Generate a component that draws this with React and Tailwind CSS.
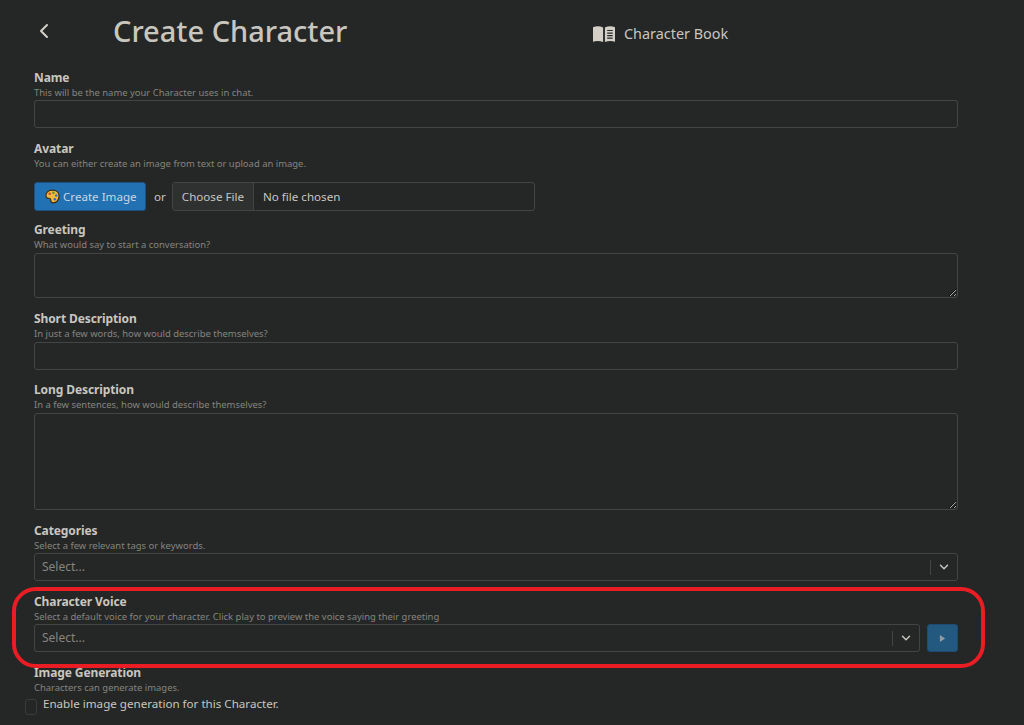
import { ChevronLeft, ChevronDown } from "lucide-react";

const inputCls = "block w-full rounded-[3px] border border-[#434545] bg-transparent";

function Label({ title, hint, gap = "mb-px" }) {
  return (
    <div className={gap}>
      <div className="h-[16px] text-[12px] leading-[16px] font-bold tracking-[-0.1px] text-[#c9c6bf]">{title}</div>
      <div className="h-[14px] text-[9.45px] leading-[14px] text-[#86847e]">{hint}</div>
    </div>
  );
}

function SelectBox({ className }) {
  return (
    <div className={`flex h-[28px] items-center rounded-[3px] border border-[#434545] ${className}`}>
      <span className="flex-1 pl-[7px] text-[12px] text-[#86847e]">Select...</span>
      <span className="h-[15px] w-px bg-[#434545]" />
      <ChevronDown className="mx-[6px] h-[14px] w-[14px] text-[#c9c6bf]" strokeWidth={2.5} />
    </div>
  );
}

function PaletteIcon() {
  return (
    <svg viewBox="0 0 16 16" className="h-[15px] w-[15px] shrink-0">
      <path d="M8 1.2C3.8 1.2 1 3.6 1 6.8c0 2.4 1.6 3.2 3 3.1 1.4-.1 2 .5 2 1.6 0 1.6 1 3.3 2.8 3.3 3.6 0 6.2-3.3 6.2-7.3C15 3.6 12 1.2 8 1.2z" fill="#f5b83d" stroke="#3a2a10" strokeWidth="1.2" />
      <circle cx="5" cy="5" r="1.3" fill="#d9412f" />
      <circle cx="9" cy="4" r="1.3" fill="#4a9a3c" />
      <circle cx="12" cy="7" r="1.3" fill="#2f6fc4" />
      <circle cx="10.5" cy="11" r="1.3" fill="#2f6fc4" />
    </svg>
  );
}

function BookIcon() {
  return (
    <svg viewBox="0 0 24 20" className="h-[18px] w-[22px]" preserveAspectRatio="none" fill="#d3cfc7">
      <path d="M0 2.5C3.5 1 7.5 1 11 2.8V19c-3.5-1.6-7.5-1.6-11-.4z" />
      <path d="M13 2.8C16.5 1 20.5 1 24 2.5v16.1c-3.5-1.2-7.5-1.2-11 .4z" />
      <path d="M15.5 6.2h6M15.5 9h6M15.5 11.8h6M15.5 14.6h6" stroke="#262828" strokeWidth="1.2" />
    </svg>
  );
}

export default function App() {
  return (
    <div className="relative h-[725px] w-[1024px] overflow-hidden bg-[#252727] font-['Noto_Sans',sans-serif]">
      {/* Шапка */}
      <header className="flex h-[70px] items-start">
        <ChevronLeft className="ml-[32px] mt-[19px] h-[24px] w-[24px] text-[#d3cfc7]" strokeWidth={2} />
        <h1 className="ml-[57px] mt-[11px] w-[400px] text-[29px] leading-[40px] font-medium text-[#c9c6bf]">Create Character</h1>
        <div className="ml-[80px] mt-[24px] flex items-center gap-[9px]">
          <BookIcon />
          <span className="text-[14.4px] leading-[20px] text-[#c9c6bf]">Character Book</span>
        </div>
      </header>

      <main className="ml-[34px] flex w-[924px] flex-col">
        <Label title="Name" hint="This will be the name your Character uses in chat." gap="mb-0" />
        <div className={`${inputCls} h-[28px]`} />

        <div className="mt-[13px]">
          <Label title="Avatar" hint="You can either create an image from text or upload an image." />
        </div>
        <div className="mt-[10px] flex h-[29px] items-center">
          <button type="button" className="flex h-full w-[112px] items-center gap-[3px] rounded-[3px] border border-[#1c4f82] bg-[#2271b3] pl-[10px] text-[11.6px] text-[#c9d6e2]">
            <PaletteIcon />
            Create Image
          </button>
          <span className="ml-[8px] mr-[6px] text-[11.6px] text-[#c9c6bf]">or</span>
          <div className="flex h-full w-[363px] items-center rounded-[3px] border border-[#434545] text-[11.6px] text-[#c9c6bf]">
            <span className="flex h-full items-center border-r border-[#434545] bg-[#2f3131] px-[9px]">Choose File</span>
            <span className="pl-[9px]">No file chosen</span>
          </div>
        </div>

        <div className="mt-[11px]">
          <Label title="Greeting" hint="What would say to start a conversation?" />
        </div>
        <textarea className={`${inputCls} h-[45px]`} />

        <div className="mt-[13px]">
          <Label title="Short Description" hint="In just a few words, how would describe themselves?" />
        </div>
        <div className={`${inputCls} h-[28px]`} />

        <div className="mt-[12px]">
          <Label title="Long Description" hint="In a few sentences, how would describe themselves?" />
        </div>
        <textarea className={`${inputCls} h-[97px]`} />

        <div className="mt-[13px]">
          <Label title="Categories" hint="Select a few relevant tags or keywords." gap="mb-0" />
        </div>
        <SelectBox className="w-full" />

        <div className="mt-[13px]">
          <Label title="Character Voice" hint="Select a default voice for your character. Click play to preview the voice saying their greeting" gap="mb-0" />
        </div>
        <div className="flex gap-[7px]">
          <SelectBox className="flex-1" />
          <button type="button" className="flex h-[28px] w-[31px] items-center justify-center rounded-[3px] border border-[#1f4a72] bg-[#23587f]">
            <svg viewBox="0 0 8 8" className="h-[7px] w-[7px]" fill="#8f9aa3"><path d="M1 0l6 4-6 4z" /></svg>
          </button>
        </div>

        <div className="mt-[13px]">
          <Label title="Image Generation" hint="Characters can generate images." />
        </div>
        <div className="flex items-start">
          <span className="ml-[-9px] mt-[3px] h-[16px] w-[12px] rounded-[3px] border border-[#3a3c3c]" />
          <span className="ml-[6px] text-[11.6px] leading-[16px] text-[#c9c6bf]">Enable image generation for this Character.</span>
        </div>
      </main>

      {/* Красная рамка поверх формы */}
      <div className="pointer-events-none absolute left-[12px] top-[587px] h-[81px] w-[973px] rounded-[24px] border-[4px] border-[#ea1c24]" />
    </div>
  );
}
